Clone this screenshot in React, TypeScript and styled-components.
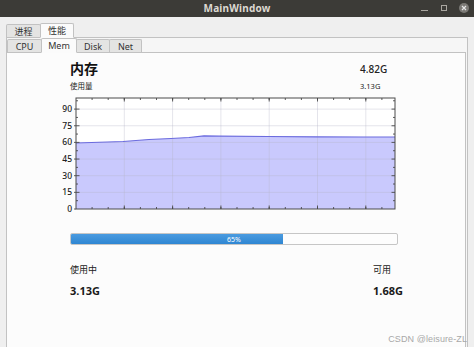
import styled, { createGlobalStyle } from 'styled-components'

const GlobalStyle = createGlobalStyle`
  html, body {
    margin: 0;
    padding: 0;
    background: #efefef;
  }
  body {
    font-family: 'Noto Sans', 'Noto Sans CJK SC', sans-serif;
    color: #2e2e2e;
  }
`

const Window = styled.div`
  display: flex;
  flex-direction: column;
  width: 474px;
  height: 347px;
  overflow: hidden;
  position: relative;
  background: #efefef;
`

const TitleBar = styled.div`
  display: grid;
  grid-template-columns: 1fr auto 1fr;
  align-items: center;
  height: 17px;
  flex-shrink: 0;
  background: #3c3b37;
`

const Title = styled.div`
  grid-column: 2;
  font-size: 10px;
  font-weight: 700;
  color: #dcd9d2;
  letter-spacing: 0.2px;
  line-height: 17px;
`

const Controls = styled.div`
  grid-column: 3;
  display: flex;
  justify-content: flex-end;
  height: 17px;
`

const ControlCell = styled.div`
  width: 20px;
  height: 17px;
  display: flex;
  align-items: center;
  justify-content: center;
`

const Minimize = styled.div`
  width: 7px;
  height: 1px;
  margin-top: 3px;
  background: #a9a6a0;
`

const Maximize = styled.div`
  width: 4px;
  height: 4px;
  border: 1px solid #a9a6a0;
  margin-bottom: 1px;
`

const Close = styled.div`
  width: 10px;
  height: 10px;
  border-radius: 50%;
  background: #7c7a76;
  display: flex;
  align-items: center;
  justify-content: center;
  margin-bottom: 1px;
`

const Body = styled.div`
  flex: 1;
  display: flex;
  flex-direction: column;
  padding: 6px 6px 0 6px;
  min-height: 0;
`

const TabBar = styled.div`
  display: flex;
  align-items: flex-end;
  flex-shrink: 0;
`

const Tab = styled.div<{ $active?: boolean; $width: number; $h: number }>`
  width: ${({ $width }) => $width}px;
  height: ${({ $active, $h }) => ($active ? $h + 2 : $h)}px;
  box-sizing: border-box;
  display: flex;
  align-items: center;
  justify-content: center;
  font-size: 9px;
  line-height: 1;
  color: #333;
  background: ${({ $active }) => ($active ? '#fbfbfb' : '#e4e4e3')};
  border: 1px solid #c2c2c2;
  border-bottom: ${({ $active }) => ($active ? '1px solid #fbfbfb' : 'none')};
  margin-right: -1px;
  border-radius: 2px 2px 0 0;
  position: relative;
  z-index: ${({ $active }) => ($active ? 2 : 1)};
  margin-bottom: ${({ $active }) => ($active ? '-1px' : '0')};
`

const OuterPane = styled.div`
  flex: 1;
  display: flex;
  flex-direction: column;
  border: 1px solid #c2c2c2;
  border-bottom: none;
  background: #f6f6f6;
  min-height: 0;
`

const InnerPane = styled.div`
  flex: 1;
  display: flex;
  flex-direction: column;
  background: #fcfcfc;
  border-top: 1px solid #c2c2c2;
  border-right: 1px solid #c2c2c2;
  margin-right: 1px;
  padding: 6px 0 0 63px;
`

const InfoRow = styled.div<{ $col: number }>`
  display: grid;
  grid-template-columns: ${({ $col }) => $col}px auto;
  align-items: center;
`

const Heading = styled.div`
  font-size: 14px;
  font-weight: 700;
  line-height: 18px;
  color: #111;
`

const HeadValue = styled.div`
  font-size: 10px;
  font-weight: 500;
  line-height: 18px;
  color: #222;
  padding-top: 1px;
`

const SmallText = styled.div`
  font-size: 7.5px;
  line-height: 12px;
  color: #222;
`

const SubRow = styled(InfoRow)`
  margin-top: 2px;
`

const ChartBox = styled.div`
  margin: 2px 0 0 -16px;
  height: 122px;
`

const Progress = styled.div`
  position: relative;
  width: 328px;
  height: 12px;
  box-sizing: border-box;
  margin-top: 17px;
  border: 1px solid #c6c6c6;
  border-radius: 2px;
  background: #fdfdfd;
  overflow: hidden;
`

const ProgressFill = styled.div`
  height: 100%;
  background: linear-gradient(#4a9be0, #2f86d2);
`

const ProgressLabel = styled.div`
  position: absolute;
  inset: 0;
  display: flex;
  align-items: center;
  justify-content: center;
  font-size: 7px;
  color: #ffffff;
  line-height: 1;
`

const StatLabels = styled(InfoRow)`
  margin-top: 19px;
`

const StatLabel = styled.div`
  font-size: 9px;
  line-height: 12px;
  color: #222;
`

const StatValues = styled(InfoRow)`
  margin-top: 8px;
`

const StatValue = styled.div`
  font-size: 11px;
  font-weight: 700;
  line-height: 14px;
  color: #1a1a1a;
`

const Watermark = styled.div`
  position: absolute;
  right: 7px;
  bottom: 3px;
  font-family: 'Liberation Sans', 'Noto Sans', sans-serif;
  font-size: 9px;
  color: #a8a8a8;
  letter-spacing: 0.1px;
`

// chart geometry, in svg coords
const L = 22
const R = 341
const T = 4
const B = 115
const vy = (v: number) => B - v * 1.11

// memory usage history, already in svg coords
const points: [number, number][] = [
  [22, 49],
  [69, 47.5],
  [95, 45.5],
  [117, 44.5],
  [135, 43.5],
  [150, 41.8],
  [165, 42.2],
  [214, 42.5],
  [262, 42.8],
  [310, 43],
  [341, 43],
]

function MemChart() {
  const majorX: number[] = []
  for (let x = L + 48.3; x < R - 1; x += 48.3) majorX.push(x)
  const minorX: number[] = []
  for (let x = L + 16.1; x < R - 1; x += 16.1) minorX.push(x)
  const majorY = [15, 30, 45, 60, 75, 90]
  const minorY: number[] = []
  for (let v = 7.5; v < 100; v += 15) minorY.push(v)

  const line = points.map(([x, y]) => `${x},${y}`).join(' ')
  const area = `${L},${B} ${line} ${R},${B}`

  return (
    <svg width="347" height="122" viewBox="0 0 347 122">
      <rect x={L} y={T} width={R - L} height={B - T} fill="#ffffff" />
      <polygon points={area} fill="#c9c9fd" />
      {majorX.map((x) => (
        <line key={'gx' + x} x1={x} x2={x} y1={T} y2={B} stroke="#b4b4c8" strokeOpacity="0.45" strokeWidth="0.8" />
      ))}
      {majorY.map((v) => (
        <line key={'gy' + v} x1={L} x2={R} y1={vy(v)} y2={vy(v)} stroke="#b4b4c8" strokeOpacity="0.45" strokeWidth="0.8" />
      ))}
      <polyline points={line} fill="none" stroke="#6b6bde" strokeWidth="1.2" />
      <rect x={L} y={T} width={R - L} height={B - T} fill="none" stroke="#4a4a4a" strokeWidth="1" />
      {minorX.map((x) => (
        <g key={'tx' + x}>
          <line x1={x} x2={x} y1={B} y2={B - 2} stroke="#4a4a4a" strokeWidth="0.9" />
          <line x1={x} x2={x} y1={T} y2={T + 2} stroke="#4a4a4a" strokeWidth="0.9" />
        </g>
      ))}
      {majorX.map((x) => (
        <g key={'mx' + x}>
          <line x1={x} x2={x} y1={B} y2={B - 3.5} stroke="#4a4a4a" strokeWidth="0.9" />
          <line x1={x} x2={x} y1={T} y2={T + 3.5} stroke="#4a4a4a" strokeWidth="0.9" />
        </g>
      ))}
      {minorY.map((v) => (
        <g key={'ty' + v}>
          <line x1={L} x2={L + 2} y1={vy(v)} y2={vy(v)} stroke="#4a4a4a" strokeWidth="0.9" />
          <line x1={R} x2={R - 2} y1={vy(v)} y2={vy(v)} stroke="#4a4a4a" strokeWidth="0.9" />
        </g>
      ))}
      {majorY.map((v) => (
        <g key={'my' + v}>
          <line x1={L - 2} x2={L + 3.5} y1={vy(v)} y2={vy(v)} stroke="#4a4a4a" strokeWidth="0.9" />
          <line x1={R} x2={R - 3.5} y1={vy(v)} y2={vy(v)} stroke="#4a4a4a" strokeWidth="0.9" />
        </g>
      ))}
      <line x1={L - 2} x2={L} y1={B} y2={B} stroke="#4a4a4a" strokeWidth="0.9" />
      {[0, ...majorY].map((v) => (
        <text
          key={'l' + v}
          x={L - 4}
          y={vy(v) + 3}
          textAnchor="end"
          fontSize="8.5"
          fontWeight="500"
          fill="#222"
          fontFamily="'Noto Sans', sans-serif"
        >
          {v}
        </text>
      ))}
    </svg>
  )
}

export default function App() {
  return (
    <>
      <GlobalStyle />
      <Window>
        <TitleBar>
          <Title>MainWindow</Title>
          <Controls>
            <ControlCell>
              <Minimize />
            </ControlCell>
            <ControlCell>
              <Maximize />
            </ControlCell>
            <ControlCell>
              <Close>
                <svg width="6" height="6" viewBox="0 0 6 6">
                  <path d="M1 1L5 5M5 1L1 5" stroke="#e6e6e6" strokeWidth="1.2" />
                </svg>
              </Close>
            </ControlCell>
          </Controls>
        </TitleBar>
        <Body>
          <TabBar>
            <Tab $width={35} $h={13}>进程</Tab>
            <Tab $width={34} $h={13} $active>
              性能
            </Tab>
          </TabBar>
          <OuterPane>
            <TabBar>
              <Tab $width={35} $h={13}>CPU</Tab>
              <Tab $width={36} $h={13} $active>
                Mem
              </Tab>
              <Tab $width={34} $h={13}>Disk</Tab>
              <Tab $width={33} $h={13}>Net</Tab>
            </TabBar>
            <InnerPane>
              <InfoRow $col={290}>
                <Heading>内存</Heading>
                <HeadValue>4.82G</HeadValue>
              </InfoRow>
              <SubRow $col={290}>
                <SmallText>使用量</SmallText>
                <SmallText>3.13G</SmallText>
              </SubRow>
              <ChartBox>
                <MemChart />
              </ChartBox>
              <Progress>
                <ProgressFill style={{ width: '65%' }} />
                <ProgressLabel>65%</ProgressLabel>
              </Progress>
              <StatLabels $col={303}>
                <StatLabel>使用中</StatLabel>
                <StatLabel>可用</StatLabel>
              </StatLabels>
              <StatValues $col={303}>
                <StatValue>3.13G</StatValue>
                <StatValue>1.68G</StatValue>
              </StatValues>
            </InnerPane>
          </OuterPane>
        </Body>
        <Watermark>CSDN @leisure-ZL</Watermark>
      </Window>
    </>
  )
}
